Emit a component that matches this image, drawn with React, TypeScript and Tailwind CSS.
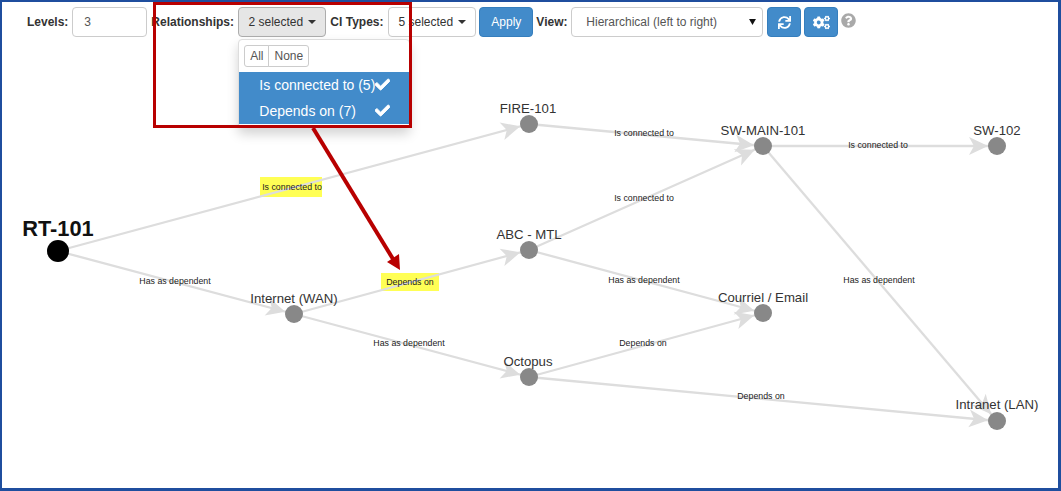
import { FaCheck, FaCogs, FaQuestionCircle, FaSync } from "react-icons/fa";

type Node = { x: number; y: number; label: string; lx?: number; ly: number };

const nodes: Record<string, Node> = {
  fire: { x: 529, y: 124, label: "FIRE-101", lx: 528, ly: 113 },
  abc: { x: 529, y: 250, label: "ABC - MTL", ly: 239 },
  wan: { x: 294, y: 314, label: "Internet (WAN)", ly: 303 },
  octopus: { x: 529, y: 377, label: "Octopus", lx: 528, ly: 366 },
  main: { x: 763, y: 146, label: "SW-MAIN-101", ly: 135 },
  sw102: { x: 997, y: 146, label: "SW-102", ly: 135 },
  mail: { x: 763, y: 313, label: "Courriel / Email", ly: 302 },
  lan: { x: 997, y: 421, label: "Intranet (LAN)", ly: 409 },
};
const root = { x: 58, y: 251 };

const edges = [
  { from: root, to: nodes.fire },
  { from: root, to: nodes.wan },
  { from: nodes.wan, to: nodes.abc },
  { from: nodes.wan, to: nodes.octopus },
  { from: nodes.fire, to: nodes.main },
  { from: nodes.abc, to: nodes.main },
  { from: nodes.abc, to: nodes.mail },
  { from: nodes.octopus, to: nodes.mail },
  { from: nodes.octopus, to: nodes.lan },
  { from: nodes.main, to: nodes.sw102 },
  { from: nodes.main, to: nodes.lan },
];

const edgeLabels = [
  { x: 292, y: 190, text: "Is connected to" },
  { x: 175, y: 284, text: "Has as dependent" },
  { x: 410, y: 285, text: "Depends on" },
  { x: 409, y: 346, text: "Has as dependent" },
  { x: 644, y: 136, text: "Is connected to" },
  { x: 644, y: 201, text: "Is connected to" },
  { x: 644, y: 283, text: "Has as dependent" },
  { x: 643, y: 346, text: "Depends on" },
  { x: 761, y: 399, text: "Depends on" },
  { x: 878, y: 148, text: "Is connected to" },
  { x: 879, y: 283, text: "Has as dependent" },
];

function Caret() {
  return <span className="ml-[5px] inline-block border-x-[4px] border-t-[4px] border-x-transparent border-t-[#333]" />;
}

function Graph() {
  return (
    <svg viewBox="2 40 1056 448" className="block h-[448px] w-[1056px]" style={{ fontFamily: "'Liberation Sans', sans-serif" }}>
      <rect x="260" y="177" width="62" height="20" fill="#ffff55" />
      <rect x="381" y="273" width="58" height="18" fill="#ffff55" />
      {edges.map((e, i) => {
        const angle = (Math.atan2(e.to.y - e.from.y, e.to.x - e.from.x) * 180) / Math.PI;
        return (
          <g key={i}>
            <line x1={e.from.x} y1={e.from.y} x2={e.to.x} y2={e.to.y} stroke="#dddddd" strokeWidth="2.3" />
            <path d="M-9,0 L-28,-9 L-23,0 L-28,9 Z" fill="#dddddd" transform={`translate(${e.to.x} ${e.to.y}) rotate(${angle})`} />
          </g>
        );
      })}
      {edgeLabels.map((l, i) => (
        <text key={i} x={l.x} y={l.y} textAnchor="middle" fontSize="8.8" fill="#222">
          {l.text}
        </text>
      ))}
      {Object.values(nodes).map((n) => (
        <g key={n.label}>
          <circle cx={n.x} cy={n.y} r="9" fill="#888888" />
          <text x={n.lx ?? n.x} y={n.ly} textAnchor="middle" fontSize="13.2" fill="#333">
            {n.label}
          </text>
        </g>
      ))}
      <circle cx={root.x} cy={root.y} r="11" fill="#000" />
      <text x="58" y="236" textAnchor="middle" fontSize="21.8" fontWeight="700" fill="#111">
        RT-101
      </text>
    </svg>
  );
}

export default function App() {
  return (
    <div className="relative h-[491px] w-[1061px] overflow-hidden border-t-2 border-r-[3px] border-b-[3px] border-l-2 border-[#1f4e9e] bg-white font-['Liberation_Sans',sans-serif] text-xs text-[#555]">
      {/* toolbar */}
      <div className="flex h-[38px] items-start pt-[5px] pl-[25px]">
        <label className="mr-[4px] flex h-[30px] items-center font-bold text-[#333]">Levels:</label>
        <div className="flex h-[30px] w-[75px] items-center rounded-[4px] border border-[#ccc] pl-[11px] text-[#555]">3</div>
        <label className="ml-[4px] flex h-[30px] w-[87px] items-center font-bold text-[#333]">Relationships:</label>

        <div className="relative">
          <button className="flex h-[30px] w-[88px] items-center justify-center rounded-[4px] border border-[#adadad] bg-[#e6e6e6] text-[#333]">
            2 selected
            <Caret />
          </button>
          {/* open menu */}
          <div className="absolute top-[32px] left-0 z-10 h-[89px] w-[172px] rounded-[4px] border border-[#ddd] bg-white shadow-[0_6px_12px_rgba(0,0,0,0.175)]">
            <div className="flex pt-[5px] pl-[5px]">
              <span className="flex h-[22px] w-[25px] items-center justify-center rounded-l-[3px] border border-[#ccc]">All</span>
              <span className="-ml-px flex h-[22px] w-[41px] items-center justify-center rounded-r-[3px] border border-[#ccc]">None</span>
            </div>
            <div className="mt-[5px] bg-[#428bca] text-sm text-white">
              <div className="relative flex h-[26px] items-center pl-[20px]">
                Is connected to (5)
                <FaCheck className="absolute top-[5px] left-[136px] stroke-current stroke-[30] text-[15px]" />
              </div>
              <div className="relative flex h-[26px] items-center pl-[20px]">
                Depends on (7)
                <FaCheck className="absolute top-[5px] left-[136px] stroke-current stroke-[30] text-[15px]" />
              </div>
            </div>
          </div>
        </div>

        <label className="ml-[4px] flex h-[30px] w-[58px] items-center font-bold text-[#333]">CI Types:</label>
        <button className="flex h-[30px] w-[88px] items-center justify-center rounded-[4px] border border-[#ccc] bg-white text-[#333]">
          5 selected
          <Caret />
        </button>
        <button className="ml-[3px] flex h-[30px] w-[54px] items-center justify-center rounded-[4px] border border-[#357ebd] bg-[#428bca] text-white">Apply</button>
        <label className="ml-[3px] flex h-[30px] w-[35px] items-center font-bold text-[#333]">View:</label>
        <div className="relative flex h-[30px] w-[192px] items-center rounded-[4px] border border-[#ccc] pl-[14px] text-[#555]">
          Hierarchical (left to right)
          <svg viewBox="0 0 8 7" className="absolute top-[11px] right-[6px] h-[6px] w-[7px]">
            <path d="M0,0 H8 L4,7 Z" fill="#111" />
          </svg>
        </div>
        <button className="ml-[4px] flex h-[30px] w-[34px] items-center justify-center rounded-[4px] border border-[#357ebd] bg-[#428bca] text-white">
          <FaSync className="text-[13px]" />
        </button>
        <button className="ml-[3px] flex h-[30px] w-[34px] items-center justify-center rounded-[4px] border border-[#357ebd] bg-[#428bca] text-white">
          <FaCogs className="text-[17px]" />
        </button>
        <FaQuestionCircle className="mt-[6px] ml-[3px] text-[15px] text-[#a9a9a9]" />
      </div>

      <Graph />

      {/* red annotation box and arrow */}
      <svg viewBox="2 2 1056 486" className="pointer-events-none absolute top-0 left-0 z-20 h-[486px] w-[1056px]">
        <rect x="154.5" y="3.5" width="256" height="123" fill="none" stroke="#b80000" strokeWidth="3" />
        <line x1="313" y1="128" x2="393" y2="259" stroke="#b80000" strokeWidth="4" />
        <path d="M400,270 L387,262 L399,254 Z" fill="#b80000" />
      </svg>
    </div>
  );
}
